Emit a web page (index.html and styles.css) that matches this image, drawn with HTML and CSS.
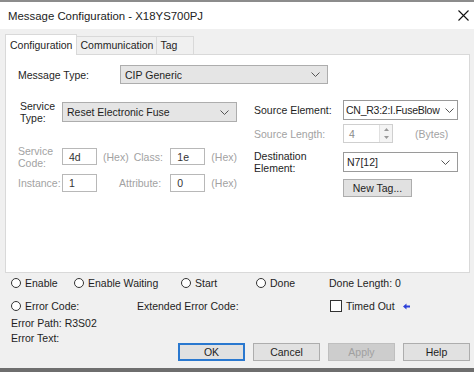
FILE: index.html
```html
<!DOCTYPE html>
<html lang="en">
<head>
    <meta charset="UTF-8">
    <title>Message Configuration - X18YS700PJ</title>
    <link rel="stylesheet" href="styles.css">
</head>
<body>
<div class="window">
    <div class="titlebar">
        <span class="title">Message Configuration - X18YS700PJ</span>
        <svg class="close" width="11" height="11" viewBox="0 0 11 11"><path d="M0.5 0.5 L10.5 10.5 M10.5 0.5 L0.5 10.5" stroke="#111" stroke-width="1.1" fill="none"/></svg>
    </div>

    <div class="dialog">
        <div class="tabs">
            <div class="tab active">Configuration</div>
            <div class="tab">Communication</div>
            <div class="tab tag">Tag</div>
        </div>

        <div class="panel">
            <div class="row msg-type">
                <label class="lbl">Message Type:</label>
                <div class="select gray w-msg"><span class="val">CIP Generic</span><svg class="chev" width="9" height="5" viewBox="0 0 9 5"><path d="M0.5 0.5 L4.5 4.5 L8.5 0.5" stroke="#555" fill="none"/></svg></div>
            </div>

            <div class="columns">
                <div class="col left">
                    <div class="row">
                        <label class="lbl two svc">Service<br>Type:</label>
                        <div class="select gray w-svc"><span class="val">Reset Electronic Fuse</span><svg class="chev" width="9" height="5" viewBox="0 0 9 5"><path d="M0.5 0.5 L4.5 4.5 L8.5 0.5" stroke="#555" fill="none"/></svg></div>
                    </div>
                    <div class="row code-row">
                        <label class="lbl two dim w-code">Service<br>Code:</label>
                        <div class="field">4d</div>
                        <span class="dim hex">(Hex)</span>
                        <span class="dim class-lbl">Class:</span>
                        <div class="field">1e</div>
                        <span class="dim hex">(Hex)</span>
                    </div>
                    <div class="row inst-row">
                        <label class="lbl dim w-code">Instance:</label>
                        <div class="field">1</div>
                        <span class="dim attr-lbl">Attribute:</span>
                        <div class="field">0</div>
                        <span class="dim hex">(Hex)</span>
                    </div>
                </div>

                <div class="col right">
                    <div class="row">
                        <label class="lbl w-right">Source Element:</label>
                        <div class="select white w-src tight"><span class="val">CN_R3:2:I.FuseBlow</span><svg class="chev" width="9" height="5" viewBox="0 0 9 5"><path d="M0.5 0.5 L4.5 4.5 L8.5 0.5" stroke="#555" fill="none"/></svg></div>
                    </div>
                    <div class="row len-row">
                        <label class="lbl dim w-right">Source Length:</label>
                        <div class="spinner">
                            <span>4</span>
                            <div class="spin">
                                <svg width="5" height="3" viewBox="0 0 5 3"><path d="M0 3 L2.5 0 L5 3 Z" fill="#999"/></svg>
                                <svg width="5" height="3" viewBox="0 0 5 3"><path d="M0 0 L2.5 3 L5 0 Z" fill="#999"/></svg>
                            </div>
                        </div>
                        <span class="dim bytes">(Bytes)</span>
                    </div>
                    <div class="row dest-row">
                        <label class="lbl two w-right">Destination<br>Element:</label>
                        <div class="select white w-src"><span class="val">N7[12]</span><svg class="chev" width="9" height="5" viewBox="0 0 9 5"><path d="M0.5 0.5 L4.5 4.5 L8.5 0.5" stroke="#555" fill="none"/></svg></div>
                    </div>
                    <div class="row newtag-row">
                        <button class="btn newtag">New Tag...</button>
                    </div>
                </div>
            </div>
        </div>

        <div class="status">
            <div class="srow">
                <span class="opt w-enable"><i class="radio"></i>Enable</span>
                <span class="opt w-waiting"><i class="radio"></i>Enable Waiting</span>
                <span class="opt w-start"><i class="radio"></i>Start</span>
                <span class="opt w-done"><i class="radio"></i>Done</span>
                <span>Done Length: 0</span>
            </div>
            <div class="srow second">
                <span class="opt w-errcode"><i class="radio"></i>Error Code:</span>
                <span class="w-ext">Extended Error Code:</span>
                <span class="opt"><i class="check"></i>Timed Out</span>
                <svg class="arrow" width="7" height="7" viewBox="0 0 7 7"><path d="M0 3.5 L3.5 0.5 L3.5 2.5 L7 2.5 L7 4.5 L3.5 4.5 L3.5 6.5 Z" fill="#2b3fd8"/></svg>
            </div>
            <div class="srow path">Error Path: R3S02</div>
            <div class="footer">
                <span class="errtext">Error Text:</span>
                <div class="buttons">
                    <button class="btn default">OK</button>
                    <button class="btn">Cancel</button>
                    <button class="btn disabled">Apply</button>
                    <button class="btn">Help</button>
                </div>
            </div>
        </div>
    </div>
</div>
</body>
</html>
```

FILE: styles.css
```css
body { margin: 0; padding: 0; font-family: "Liberation Sans", Arial, sans-serif; font-size: 10.5px; color: #1e1e1e; }
.window { width: 474px; height: 372px; box-sizing: border-box; border-top: 2px solid #8c8c8c; border-bottom: 4px solid #6e6e6e; background: #f0f0f0; display: flex; flex-direction: column; overflow: hidden; }

.titlebar { height: 27px; flex: none; background: #fff; display: flex; align-items: center; justify-content: space-between; padding: 0 3px 0 8px; }
.title { font-size: 11.4px; color: #222; }
.close { margin-right: 2px; }

.dialog { flex: 1; display: flex; flex-direction: column; padding: 4px 4px 0 5px; }

.tabs { display: flex; align-items: flex-end; height: 21px; }
.tab { height: 17px; line-height: 17px; padding: 0 3px; border: 1px solid #d9d9d9; border-bottom: none; background: #f0f0f0; margin-left: -1px; }
.tab.active { height: 20px; line-height: 20px; background: #fff; margin-left: 0; position: relative; z-index: 1; padding: 0 4px; margin-bottom: -1px; }
.tab.tag { width: 30px; }

.panel { height: 219px; background: #fff; border: 1px solid #d9d9d9; padding: 10px 0 0 12px; box-sizing: border-box; }

.row { display: flex; align-items: center; }
.lbl { flex: none; }
.two { line-height: 12px; }
.dim { color: #a2a2a2; }

.msg-type .lbl { width: 102px; }
.w-msg { width: 208px; height: 19px; }

.select { box-sizing: border-box; display: flex; align-items: center; justify-content: space-between; padding: 0 7px 0 4px; border: 1px solid #adadad; }
.select .val { white-space: nowrap; overflow: hidden; }
.select .chev { flex: none; margin-left: 3px; }
.select.gray { background: #e5e5e5; }
.select.white { background: #fff; border-color: #9a9a9a; padding-left: 3px; }
.select.tight { padding: 0 3px 0 2px; letter-spacing: -0.25px; }
.select.tight .chev { margin-left: 1px; }

.columns { display: flex; margin-top: 16px; }
.col.left { width: 219px; }
.col.right { margin-left: 17px; }

.svc { width: 42px; padding-left: 2px; }
.w-svc { width: 175px; height: 20px; }

.w-code { width: 44px; }
.code-row { margin-top: 24px; height: 17px; }
.inst-row { margin-top: 9px; height: 18px; }
.field { box-sizing: border-box; width: 36px; height: 100%; border: 1px solid #b8b8b8; padding-left: 6px; display: flex; align-items: center; color: #333; }
.hex { margin-left: 6px; }
.class-lbl { margin-left: 5px; width: 38px; }
.attr-lbl { margin-left: 22px; width: 53px; }

.w-right { width: 89px; }
.w-src { width: 115px; height: 20px; }
.len-row { margin-top: 4px; }
.spinner { box-sizing: border-box; width: 50px; height: 19px; border: 1px solid #cfcfcf; display: flex; align-items: center; justify-content: space-between; padding-left: 5px; color: #8a8a8a; }
.spin { width: 12px; height: 100%; display: flex; flex-direction: column; justify-content: space-around; align-items: center; border-left: 1px solid #e0e0e0; background: #f4f4f4; }
.bytes { margin-left: 22px; }
.dest-row { margin-top: 7px; }
.newtag-row { margin-top: 5px; padding-left: 89px; }

.btn { font-family: inherit; font-size: 10.5px; color: #1e1e1e; background: #e1e1e1; border: 1px solid #adadad; height: 18px; padding: 0; box-sizing: border-box; }
.newtag { width: 69px; }

.status { padding-left: 6px; }
.srow { display: flex; align-items: center; height: 14px; margin-top: 3px; }
.srow.second { margin-top: 9px; }
.srow.path { margin-top: 3px; }
.opt { display: flex; align-items: center; }
.radio { width: 8px; height: 8px; border: 1px solid #333; border-radius: 50%; margin-right: 4px; background: #fff; }
.check { width: 10px; height: 10px; border: 1px solid #333; margin-right: 4px; background: #fff; }
.w-enable { width: 63px; }
.w-waiting { width: 107px; }
.w-start { width: 75px; }
.w-done { width: 73px; }
.w-errcode { width: 126px; }
.w-ext { width: 193px; }
.arrow { margin-left: 8px; }

.footer { display: flex; align-items: flex-start; }
.errtext { margin-top: 2px; width: 168px; }
.buttons { display: flex; gap: 8px; margin-top: 13px; }
.buttons .btn { width: 67px; }
.btn.default { border-color: #2a78cf; box-shadow: inset 0 0 0 1px #2a78cf; }
.btn.disabled { background: #cdcdcd; border-color: #bfbfbf; color: #a0a0a0; }
```
